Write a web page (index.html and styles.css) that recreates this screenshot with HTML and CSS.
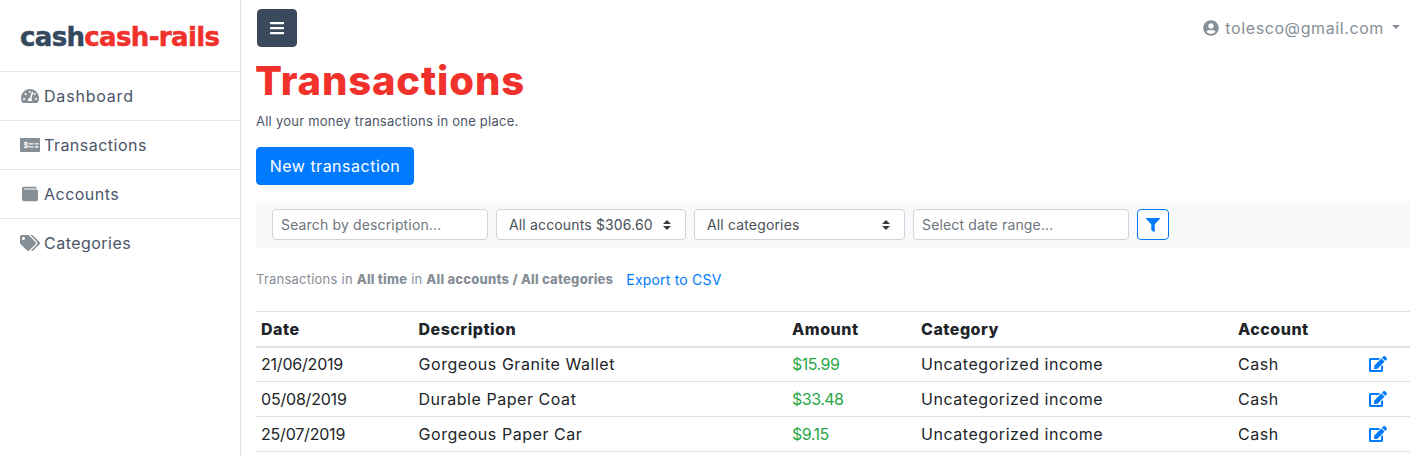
FILE: index.html
```html
<!DOCTYPE html>
<html lang="en">
<head>
    <meta charset="UTF-8">
    <meta name="viewport" content="width=device-width, initial-scale=1.0">
    <title>Transactions</title>
    <link rel="stylesheet" href="styles.css">
</head>
<body>
    <div class="wrapper">
        <!-- Sidebar -->
        <aside class="sidebar">
            <div class="logo"><span class="logo-dark">cash</span><span class="logo-red">cash-rails</span></div>
            <ul class="side-menu">
                <li>
                    <a href="#">
                        <svg class="side-icon" viewBox="0 0 576 512"><path d="M288 32C128.94 32 0 160.94 0 320c0 52.8 14.25 102.26 39.06 144.8 5.61 9.62 16.3 15.2 27.44 15.2h443c11.14 0 21.83-5.58 27.44-15.2C561.75 422.26 576 372.8 576 320c0-159.06-128.94-288-288-288zm0 64c14.71 0 26.58 10.13 30.32 23.65-1.11 2.26-2.64 4.23-3.45 6.67l-9.22 27.67c-5.13 3.49-10.97 6.01-17.64 6.01-17.67 0-32-14.33-32-32S270.33 96 288 96zM96 384c-17.67 0-32-14.33-32-32s14.33-32 32-32 32 14.33 32 32-14.33 32-32 32zm48-160c-17.67 0-32-14.33-32-32s14.33-32 32-32 32 14.33 32 32-14.33 32-32 32zm246.77-72.41l-61.33 184C343.13 347.33 352 364.54 352 384c0 11.72-3.38 22.55-8.88 32H232.88c-5.5-9.45-8.88-20.28-8.88-32 0-33.94 26.5-61.43 59.9-63.59l61.34-184.01c4.17-12.56 17.73-19.45 30.36-15.17 12.57 4.19 19.35 17.79 15.17 30.36zm14.66 57.2l15.52-46.55c3.47-1.29 7.13-2.23 11.05-2.23 17.67 0 32 14.33 32 32s-14.33 32-32 32c-11.38-.01-20.89-6.28-26.57-15.22zM480 384c-17.67 0-32-14.33-32-32s14.33-32 32-32 32 14.33 32 32-14.33 32-32 32z"/></svg>
                        <span class="ls-dash">Dashboard</span>
                    </a>
                </li>
                <li>
                    <a href="#">
                        <svg class="side-icon" viewBox="0 0 640 512"><path fill-rule="evenodd" d="M24 32h592c14 0 24 10 24 24v400c0 14-10 24-24 24H24c-14 0-24-10-24-24V56c0-14 10-24 24-24zM272 196v40h160v-40zM272 296v40h160v-40zM472 196v40h120v-40zM472 296v40h120v-40z"/><text x="110" y="345" class="check-dollar">$</text></svg>
                        Transactions
                    </a>
                </li>
                <li>
                    <a href="#">
                        <svg class="side-icon" viewBox="0 0 640 512"><path d="M128 24h352c30 0 52 20 56 52H140c-10 0-16 8-16 16s6 16 16 16h388c26 0 48 22 48 48v280c0 28-22 48-48 48H128c-36 0-64-26-64-60V84c0-34 28-60 64-60z"/></svg>
                        Accounts
                    </a>
                </li>
                <li>
                    <a href="#">
                        <svg class="side-icon" viewBox="0 0 640 512"><path d="M497.941 225.941L286.059 14.059A48 48 0 0 0 252.118 0H48C21.49 0 0 21.49 0 48v204.118a48 48 0 0 0 14.059 33.941l211.882 211.882c18.744 18.745 49.136 18.746 67.882 0l204.118-204.118c18.745-18.745 18.745-49.137 0-67.882zM112 160c-26.51 0-48-21.49-48-48s21.49-48 48-48 48 21.49 48 48-21.49 48-48 48zm513.941 133.823L421.823 497.941c-18.745 18.745-49.137 18.745-67.882 0l-.36-.36L527.64 323.522c16.999-16.999 26.36-39.6 26.36-63.64s-9.362-46.641-26.36-63.64L331.397 0h48.721a48 48 0 0 1 33.941 14.059l211.882 211.882c18.745 18.745 18.745 49.137 0 67.882z"/></svg>
                        Categories
                    </a>
                </li>
            </ul>
        </aside>

        <!-- Main content -->
        <main class="content">
            <div class="topbar">
                <button class="toggle-btn" type="button">
                    <svg class="toggle-icon" viewBox="0 0 448 512"><path d="M16 132h416c8.837 0 16-7.163 16-16V76c0-8.837-7.163-16-16-16H16C7.163 60 0 67.163 0 76v40c0 8.837 7.163 16 16 16zm0 160h416c8.837 0 16-7.163 16-16v-40c0-8.837-7.163-16-16-16H16c-8.837 0-16 7.163-16 16v40c0 8.837 7.163 16 16 16zm0 160h416c8.837 0 16-7.163 16-16v-40c0-8.837-7.163-16-16-16H16c-8.837 0-16 7.163-16 16v40c0 8.837 7.163 16 16 16z"/></svg>
                </button>
                <a class="user-menu" href="#">
                    <svg class="user-icon" viewBox="0 0 496 512"><path d="M248 8C111 8 0 119 0 256s111 248 248 248 248-111 248-248S385 8 248 8zm0 96c48.6 0 88 39.4 88 88s-39.4 88-88 88-88-39.4-88-88 39.4-88 88-88zm0 344c-58.7 0-111.3-26.6-146.5-68.2 18.8-35.4 55.6-59.8 98.5-59.8 2.4 0 4.8.4 7.1 1.1 13 4.2 26.6 6.9 40.9 6.9 14.3 0 28-2.7 40.9-6.9 2.3-.7 4.7-1.1 7.1-1.1 42.9 0 79.7 24.4 98.5 59.8C359.3 421.4 306.7 448 248 448z"/></svg>
                    tolesco@gmail.com
                    <span class="caret"></span>
                </a>
            </div>

            <h1>Transactions</h1>
            <p class="lead-text">All your money transactions in one place.</p>
            <a class="btn-new" href="#">New transaction</a>

            <form class="filters">
                <input class="field field-search" type="text" placeholder="Search by description...">
                <select class="field field-select field-accounts"><option>All accounts $306.60</option></select>
                <select class="field field-select field-categories"><option>All categories</option></select>
                <input class="field field-date" type="text" placeholder="Select date range...">
                <button class="btn-filter" type="button">
                    <svg class="filter-icon" viewBox="0 0 512 512"><path d="M487.976 0H24.028C2.71 0-8.047 25.866 7.058 40.971L192 225.941V432c0 7.831 3.821 15.17 10.237 19.662l80 55.98C298.02 518.69 320 507.493 320 487.98V225.941l184.947-184.97C520.021 25.896 509.338 0 487.976 0z"/></svg>
                </button>
            </form>

            <div class="summary">
                <span class="summary-text">Transactions in <b>All time</b> in <b>All accounts / All categories</b></span>
                <a class="export" href="#">Export to CSV</a>
            </div>

            <table class="tx-table">
                <colgroup>
                    <col class="col-date">
                    <col class="col-desc">
                    <col class="col-amount">
                    <col class="col-category">
                    <col class="col-account">
                    <col>
                </colgroup>
                <thead>
                    <tr><th>Date</th><th>Description</th><th>Amount</th><th>Category</th><th>Account</th><th></th></tr>
                </thead>
                <tbody>
                    <tr>
                        <td class="date">21/06/2019</td><td>Gorgeous Granite Wallet</td><td class="income">$15.99</td><td>Uncategorized income</td><td>Cash</td>
                        <td><a href="#"><svg class="edit-icon" viewBox="0 0 576 512"><path d="M402.6 83.2l90.2 90.2c3.8 3.8 3.8 10 0 13.8L274.4 405.6l-92.8 10.3c-12.4 1.4-22.9-9.1-21.5-21.5l10.3-92.8L388.8 83.2c3.8-3.8 10-3.8 13.8 0zm162-22.9l-48.8-48.8c-15.2-15.2-39.9-15.2-55.2 0l-35.4 35.4c-3.8 3.8-3.8 10 0 13.8l90.2 90.2c3.8 3.8 10 3.8 13.8 0l35.4-35.4c15.2-15.3 15.2-40 0-55.2zM384 346.2V448H64V128h229.8c3.2 0 6.2-1.3 8.5-3.5l40-40c7.6-7.6 2.2-20.5-8.5-20.5H48C21.5 64 0 85.5 0 112v352c0 26.5 21.5 48 48 48h352c26.5 0 48-21.5 48-48V306.2c0-10.7-12.9-16-20.5-8.5l-40 40c-2.2 2.3-3.5 5.3-3.5 8.5z"/></svg></a></td>
                    </tr>
                    <tr>
                        <td class="date">05/08/2019</td><td>Durable Paper Coat</td><td class="income">$33.48</td><td>Uncategorized income</td><td>Cash</td>
                        <td><a href="#"><svg class="edit-icon" viewBox="0 0 576 512"><path d="M402.6 83.2l90.2 90.2c3.8 3.8 3.8 10 0 13.8L274.4 405.6l-92.8 10.3c-12.4 1.4-22.9-9.1-21.5-21.5l10.3-92.8L388.8 83.2c3.8-3.8 10-3.8 13.8 0zm162-22.9l-48.8-48.8c-15.2-15.2-39.9-15.2-55.2 0l-35.4 35.4c-3.8 3.8-3.8 10 0 13.8l90.2 90.2c3.8 3.8 10 3.8 13.8 0l35.4-35.4c15.2-15.3 15.2-40 0-55.2zM384 346.2V448H64V128h229.8c3.2 0 6.2-1.3 8.5-3.5l40-40c7.6-7.6 2.2-20.5-8.5-20.5H48C21.5 64 0 85.5 0 112v352c0 26.5 21.5 48 48 48h352c26.5 0 48-21.5 48-48V306.2c0-10.7-12.9-16-20.5-8.5l-40 40c-2.2 2.3-3.5 5.3-3.5 8.5z"/></svg></a></td>
                    </tr>
                    <tr>
                        <td class="date">25/07/2019</td><td>Gorgeous Paper Car</td><td class="income">$9.15</td><td>Uncategorized income</td><td>Cash</td>
                        <td><a href="#"><svg class="edit-icon" viewBox="0 0 576 512"><path d="M402.6 83.2l90.2 90.2c3.8 3.8 3.8 10 0 13.8L274.4 405.6l-92.8 10.3c-12.4 1.4-22.9-9.1-21.5-21.5l10.3-92.8L388.8 83.2c3.8-3.8 10-3.8 13.8 0zm162-22.9l-48.8-48.8c-15.2-15.2-39.9-15.2-55.2 0l-35.4 35.4c-3.8 3.8-3.8 10 0 13.8l90.2 90.2c3.8 3.8 10 3.8 13.8 0l35.4-35.4c15.2-15.3 15.2-40 0-55.2zM384 346.2V448H64V128h229.8c3.2 0 6.2-1.3 8.5-3.5l40-40c7.6-7.6 2.2-20.5-8.5-20.5H48C21.5 64 0 85.5 0 112v352c0 26.5 21.5 48 48 48h352c26.5 0 48-21.5 48-48V306.2c0-10.7-12.9-16-20.5-8.5l-40 40c-2.2 2.3-3.5 5.3-3.5 8.5z"/></svg></a></td>
                    </tr>
                </tbody>
            </table>
        </main>
    </div>
</body>
</html>
```

FILE: styles.css
```css
* {
    box-sizing: border-box;
}
html, body {
    height: 100%;
}
body {
    font-family: Inter, "Open Sans", sans-serif;
    font-size: 16px;
    color: #212529;
    background-color: #FFFFFF;
    margin: 0;
    overflow: hidden;
}
a {
    text-decoration: none;
}
.wrapper {
    display: flex;
    height: 456px;
}

/* Sidebar */
.sidebar {
    flex: 0 0 241px;
    border-right: 1px solid #dee2e6;
}
.logo {
    height: 72px;
    padding: 2px 0 0 20px;
    display: flex;
    align-items: center;
    font-family: "DejaVu Sans", sans-serif;
    font-weight: bold;
    font-size: 26px;
    letter-spacing: -.65px;
    -webkit-text-stroke: .5px;
    border-bottom: 1px solid #e4e7ea;
}
.logo-dark {
    color: #34495e;
}
.logo-red {
    color: #f1322c;
}
.side-menu {
    list-style-type: none;
    margin: 0;
    padding: 0;
}
.side-menu li {
    height: 49px;
    border-bottom: 1px solid #e4e7ea;
}
.side-menu li:last-child {
    border-bottom-color: transparent;
}
.side-menu a {
    height: 100%;
    display: flex;
    align-items: center;
    gap: 4px;
    padding-left: 20px;
    color: #4a5568;
    letter-spacing: .48px;
}
.side-menu .ls-dash {
    letter-spacing: .8px;
}
.side-icon {
    width: 20px;
    height: 16px;
    fill: #868e96;
}
.check-dollar {
    font-size: 230px;
    font-weight: bold;
    fill: #FFFFFF;
}

/* Main content */
.content {
    flex: 1;
    min-width: 0;
    padding: 9px 15px 0;
}
.topbar {
    display: flex;
    justify-content: space-between;
    align-items: flex-start;
}
.toggle-btn {
    width: 40px;
    height: 38px;
    margin-left: 1px;
    padding: 0;
    display: flex;
    align-items: center;
    justify-content: center;
    background-color: #3a4a5c;
    border: 1px solid #3a4a5c;
    border-radius: 4px;
}
.toggle-icon {
    width: 14px;
    height: 16px;
    fill: #FFFFFF;
}
.user-menu {
    display: flex;
    align-items: center;
    gap: 6px;
    margin: 9px 10px 0 0;
    color: #868e96;
    font-size: 16px;
    letter-spacing: .6px;
}
.user-icon {
    width: 16px;
    height: 16px;
    fill: #868e96;
}
.caret {
    width: 0;
    height: 0;
    margin: -2px 0 0 2px;
    border-top: 4px solid #868e96;
    border-left: 4px solid transparent;
    border-right: 4px solid transparent;
}
h1 {
    font-size: 40px;
    line-height: 48px;
    font-weight: 800;
    letter-spacing: .85px;
    color: #f1322c;
    margin: 10px 0 0 -1px;
}
.lead-text {
    font-size: 13px;
    line-height: 20px;
    letter-spacing: .24px;
    color: #4a5568;
    margin: 6px 0 0;
}
.btn-new {
    display: inline-block;
    height: 38px;
    width: 158px;
    line-height: 36px;
    margin-top: 16px;
    text-align: center;
    color: #FFFFFF;
    background-color: #007bff;
    border: 1px solid #007bff;
    border-radius: 4px;
    letter-spacing: .5px;
}

/* Filter bar */
.filters {
    display: flex;
    align-items: center;
    gap: 8px;
    height: 47px;
    margin-top: 16px;
    padding-left: 16px;
    background-color: #f8f9fa;
}
.field {
    height: 31px;
    font-family: inherit;
    font-size: 14px;
    color: #495057;
    background-color: #FFFFFF;
    border: 1px solid #ced4da;
    border-radius: 4px;
    padding: 0 8px;
    letter-spacing: .15px;
}
.field::placeholder {
    color: #6c757d;
    opacity: 1;
}
.field-search {
    width: 216px;
}
.field-select {
    appearance: none;
    padding-left: 12px;
    background-image: url("data:image/svg+xml,%3Csvg xmlns='http://www.w3.org/2000/svg' width='8' height='10' viewBox='0 0 8 10'%3E%3Cpath fill='%23343a40' d='M4 0L0 4h8zM4 10L0 6h8z'/%3E%3C/svg%3E");
    background-repeat: no-repeat;
    background-position: right 14px center;
}
.field-accounts {
    width: 190px;
}
.field-categories {
    width: 211px;
}
.field-date {
    width: 216px;
}
.btn-filter {
    width: 32px;
    height: 31px;
    padding: 0;
    display: flex;
    align-items: center;
    justify-content: center;
    background-color: #FFFFFF;
    border: 1px solid #007bff;
    border-radius: 4px;
}
.filter-icon {
    width: 14px;
    height: 14px;
    fill: #007bff;
}

/* Summary line */
.summary {
    display: flex;
    align-items: center;
    height: 20px;
    margin-top: 21px;
}
.summary-text {
    font-size: 13px;
    letter-spacing: .23px;
    color: #868e96;
}
.summary-text b {
    font-weight: 800;
}
.export {
    margin-left: 13px;
    font-size: 14px;
    letter-spacing: .2px;
    color: #007bff;
}

/* Table */
.tx-table {
    width: 100%;
    margin-top: 22px;
    border-collapse: collapse;
    table-layout: fixed;
    letter-spacing: .55px;
}
.col-date {
    width: 157.5px;
}
.col-desc {
    width: 373.5px;
}
.col-amount {
    width: 129px;
}
.col-category {
    width: 317px;
}
.col-account {
    width: 131px;
}
.tx-table th, .tx-table td {
    padding: 0 5px;
    text-align: left;
}
.tx-table th {
    height: 35px;
    font-weight: 800;
    letter-spacing: .5px;
    border-top: 1px solid #dee2e6;
    border-bottom: 2px solid #dee2e6;
}
.tx-table td {
    height: 35px;
    border-bottom: 1px solid #dee2e6;
}
.tx-table .date {
    letter-spacing: -.2px;
}
.tx-table .income {
    letter-spacing: -.5px;
    color: #28a745;
}
.edit-icon {
    display: block;
    width: 18px;
    height: 16px;
    fill: #007bff;
}
```
